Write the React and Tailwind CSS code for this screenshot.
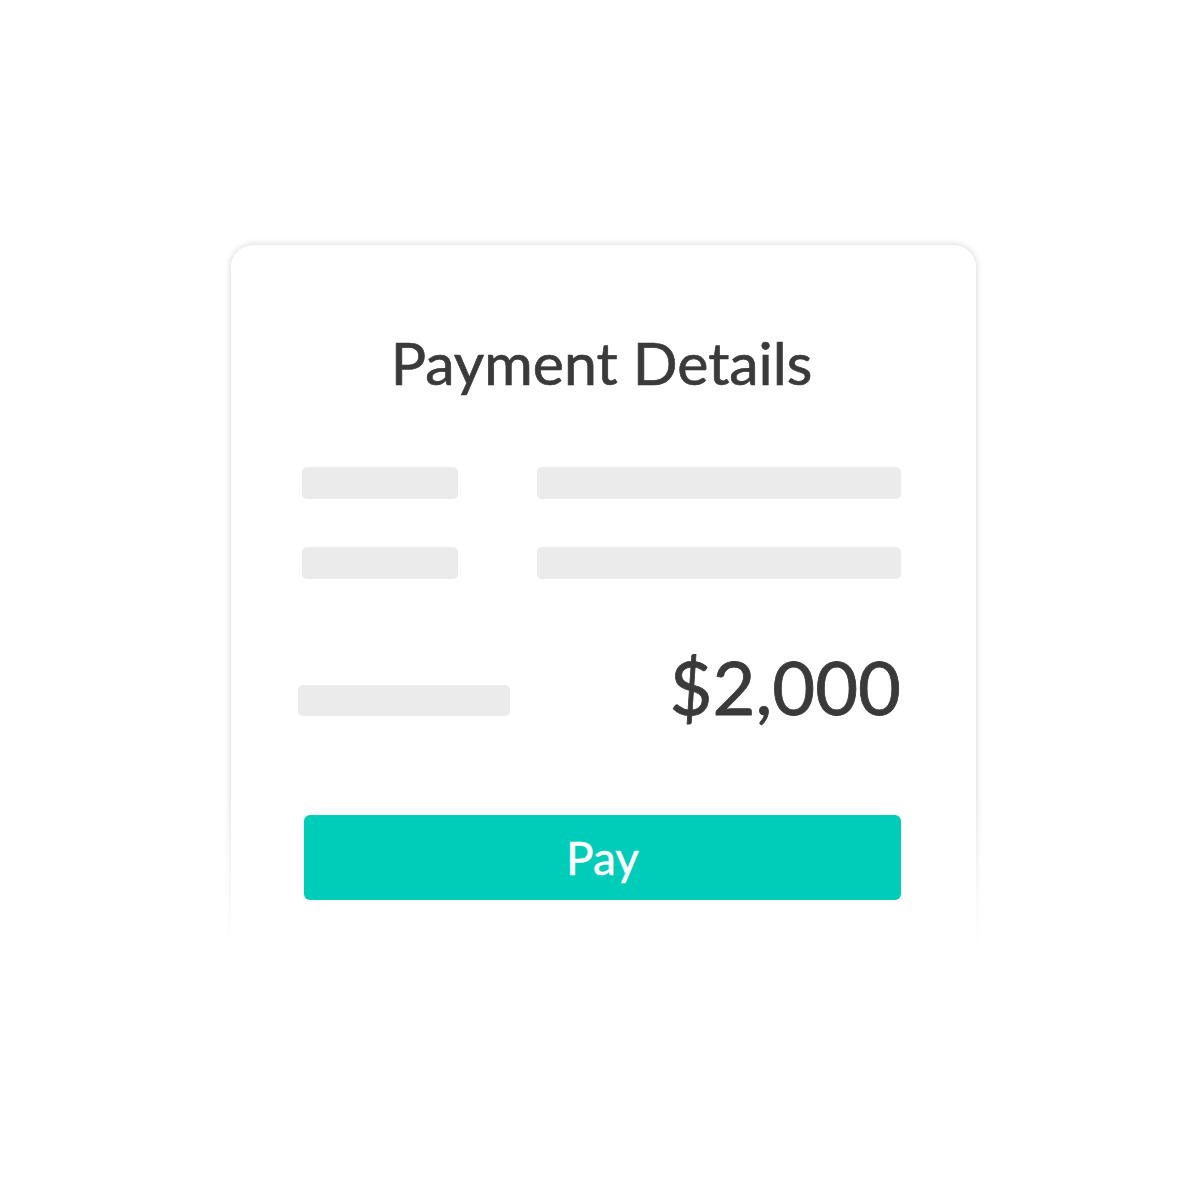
export default function App() {
  return (
    <div className="min-h-[1200px] w-[1200px] bg-white pt-[245px] pl-[231px] font-['Lato','Liberation_Sans',sans-serif]">
      <div className="relative w-[745px] h-[715px]">
        <div className="absolute -inset-[20px] p-[20px] [mask-image:linear-gradient(to_bottom,#000_0%,#000_76%,transparent_96%)]">
          <div className="h-full w-full rounded-[22px] bg-white shadow-[0_0_7px_rgba(0,0,0,0.18)]" />
        </div>
        <div className="relative flex flex-col pl-[71px] pr-[75px] pt-[88px]">
          <h1 className="text-center text-[59px] leading-none font-normal text-[#3a3a3a] [-webkit-text-stroke:0.7px_#3a3a3a]">
            Payment Details
          </h1>
          <div className="mt-[75px] flex">
            <div className="h-[32px] w-[156px] rounded-[5px] bg-[#ebebeb]" />
            <div className="ml-auto h-[32px] w-[364px] rounded-[5px] bg-[#ebebeb]" />
          </div>
          <div className="mt-[48px] flex">
            <div className="h-[32px] w-[156px] rounded-[5px] bg-[#ebebeb]" />
            <div className="ml-auto h-[32px] w-[364px] rounded-[5px] bg-[#ebebeb]" />
          </div>
          <div className="mt-[71px] flex items-start">
            <div className="-ml-[4px] mt-[35px] h-[31px] w-[212px] rounded-[5px] bg-[#ebebeb]" />
            <div className="ml-auto text-[74px] leading-none text-[#3a3a3a] [-webkit-text-stroke:0.8px_#3a3a3a]">$2,000</div>
          </div>
          <button className="ml-[2px] mt-[91px] flex h-[85px] w-[597px] items-center justify-center rounded-[6px] bg-[#00cdb9] text-[46px] leading-none text-white [-webkit-text-stroke:0.5px_#ffffff]">
            Pay
          </button>
        </div>
      </div>
    </div>
  );
}
